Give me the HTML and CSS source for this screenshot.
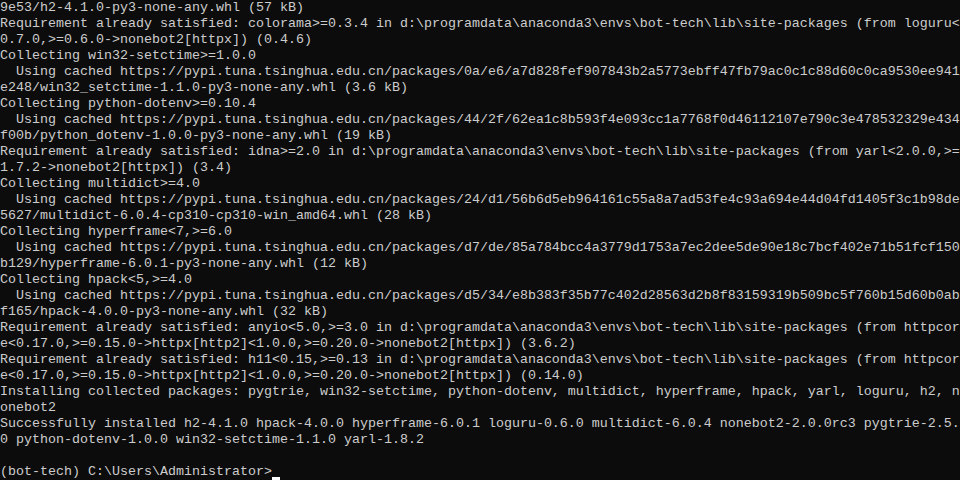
FILE: index.html
```html
<!DOCTYPE html>
<html>
<head>
<meta charset="utf-8">
<link rel="stylesheet" href="styles.css">
</head>
<body>
<pre class="console">9e53/h2-4.1.0-py3-none-any.whl (57 kB)
Requirement already satisfied: colorama&gt;=0.3.4 in d:\programdata\anaconda3\envs\bot-tech\lib\site-packages (from loguru&lt;
0.7.0,&gt;=0.6.0-&gt;nonebot2[httpx]) (0.4.6)
Collecting win32-setctime&gt;=1.0.0
  Using cached https://pypi.tuna.tsinghua.edu.cn/packages/0a/e6/a7d828fef907843b2a5773ebff47fb79ac0c1c88d60c0ca9530ee941
e248/win32_setctime-1.1.0-py3-none-any.whl (3.6 kB)
Collecting python-dotenv&gt;=0.10.4
  Using cached https://pypi.tuna.tsinghua.edu.cn/packages/44/2f/62ea1c8b593f4e093cc1a7768f0d46112107e790c3e478532329e434
f00b/python_dotenv-1.0.0-py3-none-any.whl (19 kB)
Requirement already satisfied: idna&gt;=2.0 in d:\programdata\anaconda3\envs\bot-tech\lib\site-packages (from yarl&lt;2.0.0,&gt;=
1.7.2-&gt;nonebot2[httpx]) (3.4)
Collecting multidict&gt;=4.0
  Using cached https://pypi.tuna.tsinghua.edu.cn/packages/24/d1/56b6d5eb964161c55a8a7ad53fe4c93a694e44d04fd1405f3c1b98de
5627/multidict-6.0.4-cp310-cp310-win_amd64.whl (28 kB)
Collecting hyperframe&lt;7,&gt;=6.0
  Using cached https://pypi.tuna.tsinghua.edu.cn/packages/d7/de/85a784bcc4a3779d1753a7ec2dee5de90e18c7bcf402e71b51fcf150
b129/hyperframe-6.0.1-py3-none-any.whl (12 kB)
Collecting hpack&lt;5,&gt;=4.0
  Using cached https://pypi.tuna.tsinghua.edu.cn/packages/d5/34/e8b383f35b77c402d28563d2b8f83159319b509bc5f760b15d60b0ab
f165/hpack-4.0.0-py3-none-any.whl (32 kB)
Requirement already satisfied: anyio&lt;5.0,&gt;=3.0 in d:\programdata\anaconda3\envs\bot-tech\lib\site-packages (from httpcor
e&lt;0.17.0,&gt;=0.15.0-&gt;httpx[http2]&lt;1.0.0,&gt;=0.20.0-&gt;nonebot2[httpx]) (3.6.2)
Requirement already satisfied: h11&lt;0.15,&gt;=0.13 in d:\programdata\anaconda3\envs\bot-tech\lib\site-packages (from httpcor
e&lt;0.17.0,&gt;=0.15.0-&gt;httpx[http2]&lt;1.0.0,&gt;=0.20.0-&gt;nonebot2[httpx]) (0.14.0)
Installing collected packages: pygtrie, win32-setctime, python-dotenv, multidict, hyperframe, hpack, yarl, loguru, h2, n
onebot2
Successfully installed h2-4.1.0 hpack-4.0.0 hyperframe-6.0.1 loguru-0.6.0 multidict-6.0.4 nonebot2-2.0.0rc3 pygtrie-2.5.
0 python-dotenv-1.0.0 win32-setctime-1.1.0 yarl-1.8.2

(bot-tech) C:\Users\Administrator&gt;<span class="cursor"></span></pre>
</body>
</html>
```

FILE: styles.css
```css
html, body {
  margin: 0;
  padding: 0;
  background: #0c0c0c;
}
body {
  width: 960px;
  height: 480px;
  overflow: hidden;
}
.console {
  margin: 0;
  padding: 0;
  color: #cccccc;
  font-family: "Liberation Mono", "DejaVu Sans Mono", monospace;
  font-size: 13.33px;
  line-height: 16px;
  white-space: pre;
  overflow: hidden;
}
.cursor {
  display: inline-block;
  width: 8px;
  height: 16px;
  vertical-align: top;
  background: linear-gradient(to top, #ffffff 3px, transparent 3px);
}
```
